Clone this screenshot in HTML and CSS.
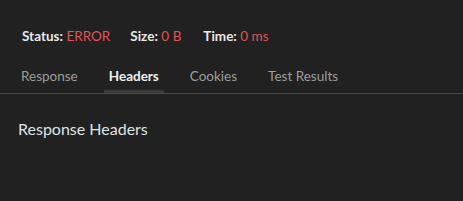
FILE: index.html
```html
<!DOCTYPE html>
<html>
<head>
<meta charset="utf-8">
<link rel="stylesheet" href="styles.css">
</head>
<body>
<div class="panel">
  <div class="status-bar">
    <span class="stat"><b>Status:</b> <span class="val">ERROR</span></span>
    <span class="stat"><b>Size:</b> <span class="val">0 B</span></span>
    <span class="stat"><b>Time:</b> <span class="val">0 ms</span></span>
  </div>
  <div class="tabs">
    <div class="tab">Response</div>
    <div class="tab active">Headers</div>
    <div class="tab">Cookies</div>
    <div class="tab">Test Results</div>
  </div>
  <div class="content">
    <div class="title">Response Headers</div>
  </div>
</div>
</body>
</html>
```
FILE: styles.css
```css
html, body {
  margin: 0;
  padding: 0;
  background: #212121;
  height: 100%;
}
body {
  font-family: Lato, "Noto Sans", sans-serif;
  color: #cccccc;
}
.panel {
  display: flex;
  flex-direction: column;
}
.status-bar {
  display: flex;
  gap: 20px;
  padding: 24px 0 0 22px;
  height: 24px;
  font-size: 13.5px;
  line-height: 24px;
}
.stat:last-child {
  margin-left: 2px;
}
.stat b {
  color: #e8e8e8;
  font-weight: 700;
}
.val {
  color: #e05555;
}
.tabs {
  display: flex;
  gap: 21px;
  padding: 14px 0 0 16px;
  border-bottom: 1px solid #4a4a4a;
  margin-top: 2px;
}
.tab {
  padding: 0 5px;
  font-size: 13.5px;
  height: 26px;
  line-height: 24px;
  color: #9d9d9d;
  border-bottom: 3px solid transparent;
}
.tab.active {
  color: #f0f0f0;
  font-weight: 700;
  border-bottom-color: #3a3a3a;
}
.content {
  padding: 25px 18px;
}
.title {
  font-size: 16px;
  font-weight: 400;
  color: #dde3e6;
}
```
